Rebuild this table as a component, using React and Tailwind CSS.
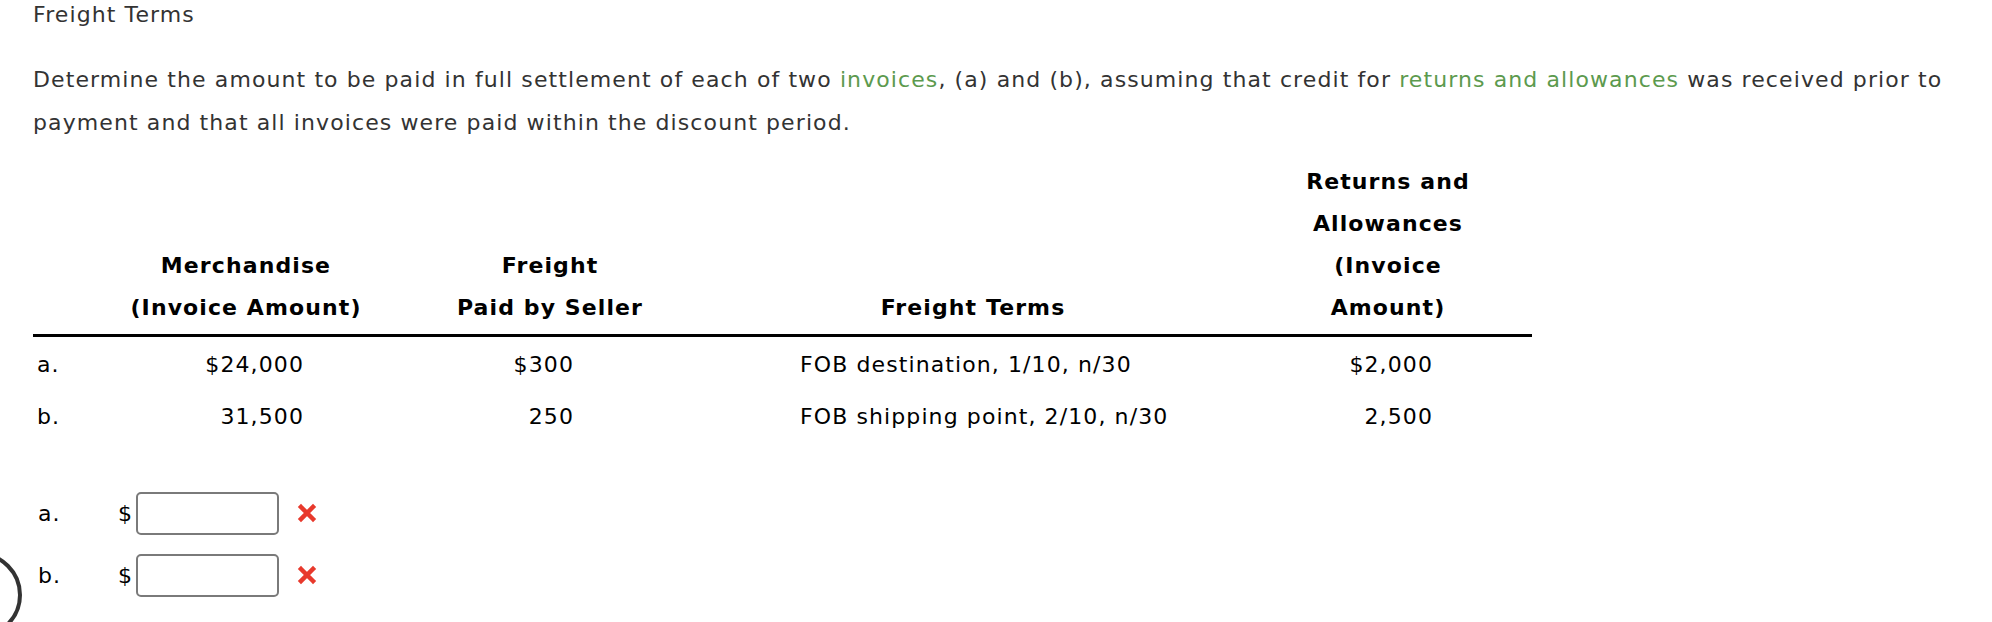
import React from 'react';

const rows = [
  { label: 'a.', merch: '$24,000', freight: '$300', terms: 'FOB destination, 1/10, n/30', returns: '$2,000' },
  { label: 'b.', merch: '31,500', freight: '250', terms: 'FOB shipping point, 2/10, n/30', returns: '2,500' },
];

function RedX() {
  return (
    <svg width="20" height="20" viewBox="0 0 20 20" className="shrink-0">
      <path d="M4 4 L16 16 M16 4 L4 16" stroke="#e8392c" strokeWidth="4.5" strokeLinecap="square" />
    </svg>
  );
}

function AnswerRow({ label }) {
  return (
    <div className="flex items-center h-[62px]">
      <span className="w-[85px] pl-[5px]">{label}</span>
      <span className="w-[18px]">$</span>
      <input
        type="text"
        className="w-[143px] h-[43px] border-2 border-[#7a7a7a] rounded-[5px] bg-white outline-none"
      />
      <span className="ml-[18px]">
        <RedX />
      </span>
    </div>
  );
}

export default function App() {
  return (
    <div
      className="relative w-[1992px] h-[622px] overflow-hidden bg-white text-[#333] pl-[33px] tracking-[1.1px]"
      style={{ fontFamily: '"DejaVu Sans", Verdana, sans-serif' }}
    >
      <h1 className="text-[22px] leading-[30px] font-normal">Freight Terms</h1>

      <p className="mt-[28px] text-[22px] leading-[43px]">
        Determine the amount to be paid in full settlement of each of two{' '}
        <span className="text-[#5c9a4e]">invoices</span>, (a) and (b), assuming that credit for{' '}
        <span className="text-[#5c9a4e]">returns and allowances</span> was received prior to
        <br />
        payment and that all invoices were paid within the discount period.
      </p>

      <div className="mt-[17px] w-[1499px] text-[22px] text-black">
        <div className="grid grid-cols-[87px_252px_356px_516px_288px] items-end font-bold leading-[42px] border-b-[3px] border-black pb-[5px]">
          <div />
          <div className="text-center">
            Merchandise
            <br />
            (Invoice Amount)
          </div>
          <div className="text-center">
            Freight
            <br />
            Paid by Seller
          </div>
          <div className="text-center pr-[26px]">Freight Terms</div>
          <div className="text-center">
            Returns and
            <br />
            Allowances
            <br />
            (Invoice
            <br />
            Amount)
          </div>
        </div>
        <div className="mt-[1px]">
          {rows.map((r) => (
            <div key={r.label} className="grid grid-cols-[87px_252px_356px_516px_288px] items-center h-[52px]">
              <div className="pl-[4px]">{r.label}</div>
              <div className="text-right pr-[68px]">{r.merch}</div>
              <div className="text-right pr-[154px]">{r.freight}</div>
              <div className="pl-[72px]">{r.terms}</div>
              <div className="text-right pr-[99px]">{r.returns}</div>
            </div>
          ))}
        </div>
      </div>

      <div className="mt-[40px] text-[22px] text-black">
        <AnswerRow label="a." />
        <AnswerRow label="b." />
      </div>

      <div className="absolute left-[-64px] top-[552px] w-[86px] h-[86px] rounded-full border-[4px] border-[#333]" />
    </div>
  );
}
